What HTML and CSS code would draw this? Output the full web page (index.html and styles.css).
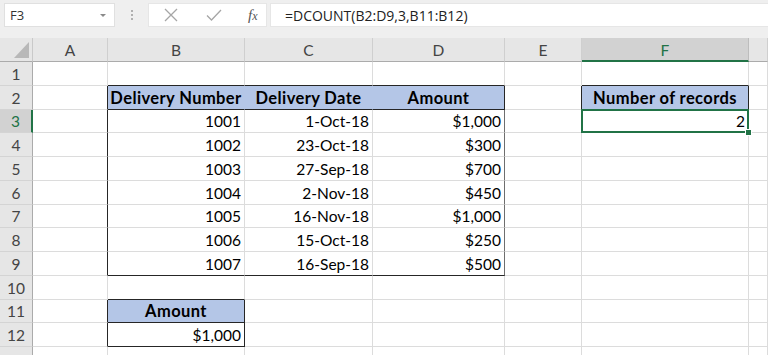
FILE: index.html
```html
<!DOCTYPE html>
<html>
<head>
<meta charset="utf-8">
<link rel="stylesheet" href="styles.css">
</head>
<body>
<div class="fbar">
  <div class="namebox"><span>F3</span><span class="dd"></span></div>
  <div class="dots"><i></i><i></i><i></i></div>
  <div class="icons">
    <svg class="ic x" width="14" height="14" viewBox="0 0 14 14"><path d="M1 1L13 13M13 1L1 13" stroke="#a6a6a6" stroke-width="1.3" fill="none"/></svg>
    <svg class="ic ok" width="16" height="14" viewBox="0 0 16 14"><path d="M1 7.5L5.5 12L15 2" stroke="#a6a6a6" stroke-width="1.3" fill="none"/></svg>
    <span class="fx">f<span>x</span></span>
  </div>
  <div class="formula">=DCOUNT(B2:D9,3,B11:B12)</div>
</div>
<div class="sheet">
  <div class="corner"><span class="tri"></span></div>
  <div class="ch">A</div><div class="ch">B</div><div class="ch">C</div><div class="ch">D</div><div class="ch">E</div><div class="ch sel">F</div><div class="ch"></div>

  <div class="rh">1</div><div class="c"></div><div class="c bb"></div><div class="c bb"></div><div class="c bb"></div><div class="c"></div><div class="c bb"></div><div class="c"></div>

  <div class="rh">2</div><div class="c br"></div><div class="c hd bb">Delivery Number</div><div class="c hd bb">Delivery Date</div><div class="c hd bb br">Amount</div><div class="c br"></div><div class="c hd bb br">Number of records</div><div class="c"></div>

  <div class="rh sel">3</div><div class="c br"></div><div class="c n">1001</div><div class="c n">1-Oct-18</div><div class="c n br2">$1,000</div><div class="c"></div><div class="c n active">2</div><div class="c"></div>

  <div class="rh">4</div><div class="c br"></div><div class="c n">1002</div><div class="c n">23-Oct-18</div><div class="c n br2">$300</div><div class="c"></div><div class="c"></div><div class="c"></div>

  <div class="rh">5</div><div class="c br"></div><div class="c n">1003</div><div class="c n">27-Sep-18</div><div class="c n br2">$700</div><div class="c"></div><div class="c"></div><div class="c"></div>

  <div class="rh">6</div><div class="c br"></div><div class="c n">1004</div><div class="c n">2-Nov-18</div><div class="c n br2">$450</div><div class="c"></div><div class="c"></div><div class="c"></div>

  <div class="rh">7</div><div class="c br"></div><div class="c n">1005</div><div class="c n">16-Nov-18</div><div class="c n br2">$1,000</div><div class="c"></div><div class="c"></div><div class="c"></div>

  <div class="rh">8</div><div class="c br"></div><div class="c n">1006</div><div class="c n">15-Oct-18</div><div class="c n br2">$250</div><div class="c"></div><div class="c"></div><div class="c"></div>

  <div class="rh">9</div><div class="c br"></div><div class="c n bb">1007</div><div class="c n bb">16-Sep-18</div><div class="c n bb br2">$500</div><div class="c"></div><div class="c"></div><div class="c"></div>

  <div class="rh">10</div><div class="c"></div><div class="c bb"></div><div class="c"></div><div class="c"></div><div class="c"></div><div class="c"></div><div class="c"></div>

  <div class="rh">11</div><div class="c br"></div><div class="c hd bb br">Amount</div><div class="c"></div><div class="c"></div><div class="c"></div><div class="c"></div><div class="c"></div>

  <div class="rh">12</div><div class="c br"></div><div class="c n bb br">$1,000</div><div class="c"></div><div class="c"></div><div class="c"></div><div class="c"></div><div class="c"></div>

  <div class="rh">13</div><div class="c"></div><div class="c"></div><div class="c"></div><div class="c"></div><div class="c"></div><div class="c"></div><div class="c"></div>
</div>
</body>
</html>
```
FILE: styles.css
```css
html, body {
  margin: 0;
  padding: 0;
  background: #ffffff;
  overflow: hidden;
}
body {
  width: 768px;
  height: 355px;
  font-family: "Lato", "Liberation Sans", sans-serif;
}
.fbar {
  height: 38px;
  background: #efefef;
  display: flex;
  align-items: flex-start;
  padding-top: 3px;
  box-sizing: border-box;
}
.namebox {
  margin-left: 4px;
  width: 111px;
  height: 24px;
  box-sizing: border-box;
  background: #fff;
  border: 1px solid #e0e0e0;
  display: flex;
  align-items: center;
  justify-content: space-between;
  padding: 0 8px 0 5px;
  font-family: "Open Sans", sans-serif;
  font-size: 13px;
  color: #333;
}
.dd {
  width: 0;
  height: 0;
  border-left: 3px solid transparent;
  border-right: 3px solid transparent;
  border-top: 3px solid #8a8a8a;
}
.dots {
  width: 33px;
  height: 24px;
  display: flex;
  flex-direction: column;
  align-items: center;
  justify-content: center;
  gap: 2px;
}
.dots i {
  display: block;
  width: 2px;
  height: 2px;
  background: #b0b0b0;
}
.icons {
  width: 119px;
  height: 24px;
  background: #fff;
  box-sizing: border-box;
  border: 1px solid #e6e6e6;
  display: flex;
  align-items: center;
  position: relative;
}
.ic.x { margin-left: 15px; }
.ic.ok { margin-left: 28px; }
.fx {
  margin-left: 26px;
  font-family: "Liberation Serif", serif;
  font-style: italic;
  font-size: 15px;
  color: #555;
}
.fx span { font-size: 12px; }
.formula {
  margin-left: 3px;
  flex: 1;
  height: 24px;
  box-sizing: border-box;
  background: #fff;
  border: 1px solid #e6e6e6;
  border-right: none;
  padding-left: 14px;
  display: flex;
  align-items: center;
  font-family: "Open Sans", sans-serif;
  font-size: 14px;
  color: #222;
}
.sheet {
  display: grid;
  grid-template-columns: 33px 75px 137px 128px 132px 77px 167px 1fr;
  grid-template-rows: 24px repeat(12, 23.75px) 30px;
  font-size: 15.5px;
}
.sheet > div {
  box-sizing: border-box;
}
.corner {
  background: #e6e6e6;
  border-right: 1px solid #c9c9c9;
  border-bottom: 1px solid #ababab;
  position: relative;
}
.tri {
  position: absolute;
  right: 3px;
  bottom: 3px;
  width: 0;
  height: 0;
  border-left: 15px solid transparent;
  border-bottom: 16px solid #b8b8b8;
}
.ch {
  background: #e6e6e6;
  border-right: 1px solid #cfcfcf;
  border-bottom: 1px solid #ababab;
  color: #444;
  display: flex;
  align-items: center;
  justify-content: center;
  padding-top: 1px;
}
.ch.sel {
  background: #d2d2d2;
  color: #217346;
  border-bottom: 2px solid #217346;
  border-right-color: #bdbdbd;
}
.rh {
  background: #e6e6e6;
  border-right: 1px solid #ababab;
  border-bottom: 1px solid #d4d4d4;
  color: #444;
  display: flex;
  align-items: center;
  justify-content: center;
  padding-top: 1px;
}
.rh.sel {
  background: #d2d2d2;
  color: #217346;
  border-right: 2px solid #217346;
}
.c {
  border-right: 1px solid #dcdcdc;
  border-bottom: 1px solid #dcdcdc;
  color: #000;
  display: flex;
  align-items: flex-end;
  padding: 0 3px 1px 3px;
  line-height: 20px;
  white-space: nowrap;
}
.n { justify-content: flex-end; }
.hd {
  background: #b4c6e7;
  border-right-color: #b4c6e7;
  font-weight: bold;
  font-size: 16.5px;
  letter-spacing: 0.4px;
  justify-content: center;
  padding: 0 1px 1px 1px;
}
.bb { border-bottom: 1px solid #262626; }
.br { border-right: 1px solid #262626; }
.br2 { border-right: 1px solid #6e6e6e; }
.active {
  position: relative;
}
.active::after {
  content: "";
  position: absolute;
  left: -1px;
  top: -1px;
  right: -1px;
  bottom: -1px;
  border: 2px solid #217346;
}
.active::before {
  content: "";
  position: absolute;
  right: -4px;
  bottom: -4px;
  width: 5px;
  height: 5px;
  background: #217346;
  border: 1px solid #fff;
  z-index: 1;
}
```
